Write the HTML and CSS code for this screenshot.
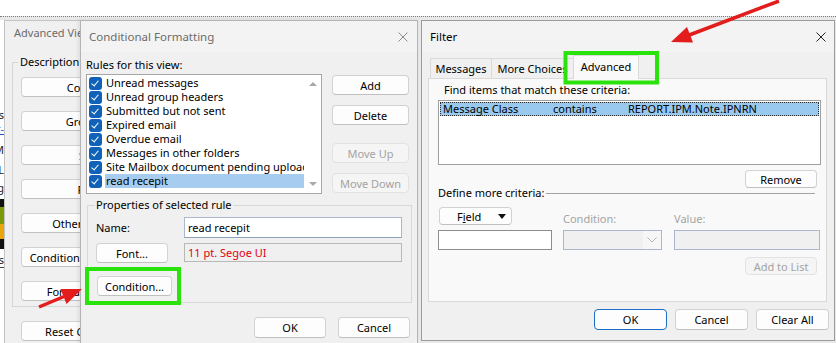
FILE: index.html
```html
<!DOCTYPE html>
<html lang="en">
<head>
  <meta charset="UTF-8" />
  <title>Conditional Formatting and Filter</title>
  <link rel="stylesheet" href="styles.css">
</head>
<body>
  <div class="desk">
    <div class="backdrop"></div>

    <div class="sliver">
      <span class="sl-line">ws</span>
      <span class="sl-line sl-link">r-</span>
      <span class="sl-line sl-m">M</span>
      <span class="sl-line sl-l">L</span>
      <span class="sl-line sl-g">g</span>
      <span class="sl-bar sl-black"></span>
      <span class="sl-bar sl-green"></span>
      <span class="sl-bar sl-orange"></span>
      <span class="sl-bar sl-black2"></span>
      <span class="sl-line sl-s">ts</span>
    </div>

    <section class="win win-back">
      <div class="back-title">Advanced View Settings: Compact</div>
      <fieldset class="back-group">
        <legend>Description</legend>
        <button class="btn back-btn">Columns...</button>
        <button class="btn back-btn">Group By...</button>
        <button class="btn back-btn">Sort...</button>
        <button class="btn back-btn">Filter...</button>
        <button class="btn back-btn">Other Settings...</button>
        <button class="btn back-btn">Conditional Formatting...</button>
        <button class="btn back-btn">Format Columns...</button>
      </fieldset>
      <button class="btn back-btn back-reset">Reset Current View</button>
    </section>

    <section class="win win-cf">
      <header class="win-title inactive">
        <span>Conditional Formatting</span>
        <svg class="close" width="10" height="10" viewBox="0 0 10 10"><path d="M0.5 0.5L9.5 9.5M9.5 0.5L0.5 9.5" /></svg>
      </header>
      <div class="cf-body">
        <div class="cf-label">Rules for this view:</div>
        <div class="cf-rules">
          <div class="rule-list">
            <ul class="rule-items">
              <li><span class="check"></span><span class="rule-name">Unread messages</span></li>
              <li><span class="check"></span><span class="rule-name">Unread group headers</span></li>
              <li><span class="check"></span><span class="rule-name">Submitted but not sent</span></li>
              <li><span class="check"></span><span class="rule-name">Expired email</span></li>
              <li><span class="check"></span><span class="rule-name">Overdue email</span></li>
              <li><span class="check"></span><span class="rule-name">Messages in other folders</span></li>
              <li><span class="check"></span><span class="rule-name">Site Mailbox document pending upload</span></li>
              <li class="selected"><span class="check"></span><span class="rule-name">read recepit</span></li>
            </ul>
            <div class="vscroll">
              <span class="tri tri-up"></span>
              <span class="tri tri-down"></span>
            </div>
          </div>
          <div class="rule-actions">
            <button class="btn act-add">Add</button>
            <button class="btn act-delete">Delete</button>
            <button class="btn act-up" disabled>Move Up</button>
            <button class="btn act-down" disabled>Move Down</button>
          </div>
        </div>

        <fieldset class="props">
          <legend>Properties of selected rule</legend>
          <div class="prop-grid">
            <span class="prop-label">Name:</span>
            <div class="field field-name">read recepit</div>
            <button class="btn btn-font">Font...</button>
            <div class="field field-font">11 pt. Segoe UI</div>
            <button class="btn btn-cond">Condition...</button>
          </div>
        </fieldset>

        <div class="dlg-actions cf-actions">
          <button class="btn">OK</button>
          <button class="btn">Cancel</button>
        </div>
      </div>
    </section>

    <section class="win win-filter">
      <header class="win-title">
        <span>Filter</span>
        <svg class="close dark" width="10" height="10" viewBox="0 0 10 10"><path d="M0.5 0.5L9.5 9.5M9.5 0.5L0.5 9.5" /></svg>
      </header>
      <div class="tabs">
        <span class="tab tab-msg">Messages</span>
        <span class="tab tab-more">More Choices</span>
        <span class="tab tab-adv active">Advanced</span>
      </div>
      <div class="tab-panel">
        <div class="panel-label">Find items that match these criteria:</div>
        <div class="crit-list">
          <div class="crit-row">
            <span>Message Class</span>
            <span>contains</span>
            <span>REPORT.IPM.Note.IPNRN</span>
          </div>
        </div>
        <button class="btn small btn-remove">Remove</button>
        <div class="define">Define more criteria:</div>
        <div class="crit-form">
          <button class="btn small btn-field"><span>F<u>i</u>eld</span><span class="caret"></span></button>
          <span class="muted">Condition:</span>
          <span class="muted">Value:</span>
          <div class="input input-field"></div>
          <div class="input input-off input-combo">
            <span class="chev">
              <svg width="10" height="6" viewBox="0 0 10 6"><path d="M0.5 0.5L5 5L9.5 0.5" /></svg>
            </span>
          </div>
          <div class="input input-off"></div>
        </div>
        <button class="btn small btn-addlist" disabled>Add to List</button>
      </div>
      <div class="dlg-actions filter-actions">
        <button class="btn btn-default">OK</button>
        <button class="btn">Cancel</button>
        <button class="btn">Clear All</button>
      </div>
    </section>

    <svg class="marks" width="836" height="343" viewBox="0 0 836 343">
      <rect class="green" x="87" y="269" width="92" height="34" />
      <rect class="green" x="565.5" y="53" width="91.5" height="29.5" />
      <line class="red" x1="779" y1="1" x2="688" y2="35.5" />
      <polygon class="red-head" points="671,42 693,42.5 687,27" />
      <line class="red" x1="39" y1="307" x2="64" y2="296.5" />
      <polygon class="red-head" points="82,289 66.5,304 60.5,289" />
    </svg>
  </div>
</body>
</html>
```

FILE: styles.css
```css
body {
  margin: 0;
  background: #ffffff;
  font-family: "Noto Sans", "Open Sans", sans-serif;
  font-size: 11px;
  color: #000000;
}
.desk {
  position: relative;
  width: 836px;
  height: 343px;
  overflow: hidden;
}
.backdrop {
  position: absolute;
  left: 0;
  top: 16px;
  width: 836px;
  height: 327px;
  background: #e8e8e8;
  border-top: 1px dotted #7c7c7c;
}

/* bits of the window behind everything, left edge */
.sliver {
  position: absolute;
  left: 0;
  top: 20px;
  width: 4px;
  height: 323px;
  background: #ffffff;
  display: flex;
  flex-direction: column;
  padding-top: 88px;
  box-sizing: border-box;
  overflow: hidden;
}
.sl-line {
  display: flex;
  justify-content: flex-end;
  height: 14px;
  line-height: 14px;
  white-space: nowrap;
  color: #222;
}
.sl-link {
  color: #1a5fd0;
  text-decoration: underline;
}
.sl-m { margin-top: 7px; }
.sl-l { margin-top: 6px; }
.sl-g { margin-top: 4px; }
.sl-bar { display: block; flex: none; }
.sl-black { height: 8px; margin-top: 4px; background: #101010; }
.sl-green { height: 17px; background: #7b9a08; }
.sl-orange { height: 15px; background: #e6a60c; }
.sl-black2 { height: 10px; background: #101010; }
.sl-s { margin-top: 4px; border-bottom: 1px solid #444; }

.win {
  position: absolute;
  box-sizing: border-box;
  background: #f0f0f0;
  border: 1px solid #aaaaaa;
}

/* Advanced View Settings (behind, only its left edge shows) */
.win-back {
  left: 4px;
  top: 20px;
  width: 80px;
  height: 330px;
  overflow: hidden;
  border-color: #c4c4c4;
}
.back-title {
  padding: 5px 0 0 9px;
  line-height: 14px;
  color: #6b6b6b;
  white-space: nowrap;
}
.back-group {
  margin: 15px 0 0 7px;
  padding: 8px 0 5px 8px;
  width: 390px;
  border: 1px solid #d6d6d6;
  display: flex;
  flex-direction: column;
  align-items: flex-start;
  gap: 14px;
}
.back-group legend {
  margin-left: -3px;
  padding: 0 2px;
  line-height: 14px;
}
.back-btn {
  width: 146px;
  flex: none;
}
.back-reset {
  display: block;
  margin: 14px 0 0 16px;
}

/* shared */
.btn {
  box-sizing: border-box;
  height: 20px;
  padding: 0;
  font: inherit;
  color: #000000;
  background: #fdfdfd;
  border: 1px solid #d2d2d2;
  border-bottom-color: #c0c0c0;
  border-radius: 4px;
  white-space: nowrap;
}
.btn:disabled {
  background: #f5f5f5;
  border-color: #e2e2e2;
  color: #a3a3a3;
}
.win-title {
  height: 31px;
  display: flex;
  align-items: center;
  justify-content: space-between;
  padding: 0 8px 0 8px;
  background: #f3f3f3;
  font-size: 11.5px;
}
.win-title.inactive { color: #6b6b6b; }
.close path {
  stroke: #8a8a8a;
  stroke-width: 1;
  fill: none;
}
.close.dark path { stroke: #222; }
fieldset legend { padding: 0; }

/* Conditional Formatting */
.win-cf {
  left: 80px;
  top: 20px;
  width: 338px;
  height: 330px;
  border-color: #b4b4b4;
  box-shadow: -2px 0 4px rgba(0, 0, 0, 0.08);
}
.win-cf .win-title { padding-right: 9px; }
.cf-body {
  padding: 6px 7px 0 5px;
}
.cf-label {
  line-height: 14px;
}
.cf-rules {
  margin-top: 2px;
  display: grid;
  grid-template-columns: 236px 77px;
  column-gap: 10px;
  align-items: start;
}
.rule-list {
  box-sizing: border-box;
  height: 120px;
  display: flex;
  background: #ffffff;
  border: 1px solid #a6a6a6;
}
.rule-items {
  flex: 1;
  min-width: 0;
  margin: 0;
  padding: 1px 0 0 2px;
  list-style: none;
}
.rule-items li {
  height: 14px;
  display: flex;
  align-items: center;
}
.check {
  flex: none;
  position: relative;
  width: 13px;
  height: 13px;
  margin-right: 3px;
  border-radius: 3px;
  background: #0f62b8;
}
.check::after {
  content: "";
  position: absolute;
  left: 4px;
  top: 2px;
  width: 3px;
  height: 6px;
  border-right: 1px solid #ffffff;
  border-bottom: 1px solid #ffffff;
  transform: rotate(40deg);
}
.rule-name {
  flex: 1;
  min-width: 0;
  padding-left: 1px;
  line-height: 14px;
  white-space: nowrap;
  overflow: hidden;
}
.selected .rule-name { background: #a6cdef; }
.vscroll {
  width: 17px;
  display: flex;
  flex-direction: column;
  justify-content: space-between;
  align-items: center;
  padding: 7px 0;
}
.tri {
  width: 0;
  height: 0;
  border-left: 4px solid transparent;
  border-right: 4px solid transparent;
}
.tri-up { border-bottom: 4px solid #a8a8a8; }
.tri-down { border-top: 4px solid #a8a8a8; }
.rule-actions {
  display: flex;
  flex-direction: column;
}
.rule-actions .btn { width: 77px; }
.act-add { margin-top: 1px; }
.act-delete { margin-top: 10px; }
.act-up { margin-top: 18px; }
.act-down { margin-top: 10px; }

.props {
  box-sizing: border-box;
  width: 325px;
  margin: 4px 0 0 1px;
  padding: 5px 9px 6px 8px;
  border: 1px solid #d8d8d8;
}
.props legend {
  margin-left: -1px;
  padding: 0 1px;
  line-height: 14px;
}
.prop-grid {
  display: grid;
  grid-template-columns: 88px 1fr;
  row-gap: 5px;
  align-items: start;
}
.prop-label { line-height: 21px; }
.field {
  box-sizing: border-box;
  padding-left: 3px;
  white-space: nowrap;
}
.field-name {
  height: 21px;
  line-height: 19px;
  background: #ffffff;
  border: 1px solid #a9b8cd;
  border-bottom-color: #8fa2bd;
}
.field-font {
  height: 19px;
  line-height: 17px;
  border: 1px solid #b8b8b8;
  color: #e4000f;
}
.btn-font { width: 72px; }
.btn-cond {
  width: 75px;
  margin: 8px 0 0 1px;
}
.dlg-actions {
  display: flex;
  justify-content: flex-end;
}
.dlg-actions .btn { height: 21px; }
.cf-actions {
  margin-top: 14px;
  gap: 12px;
}
.cf-actions .btn { width: 72px; }

/* Filter */
.win-filter {
  left: 421px;
  top: 20px;
  width: 414px;
  height: 321px;
  border-color: #9c9c9c;
}
.tabs {
  display: flex;
  align-items: flex-end;
  height: 25px;
  margin: 1px 0 0 8px;
}
.tab {
  box-sizing: border-box;
  height: 20px;
  line-height: 19px;
  text-align: center;
  background: #f0f0f0;
  border: 1px solid #dadada;
  border-bottom: none;
  white-space: nowrap;
  overflow: hidden;
}
.tab + .tab { margin-left: -1px; }
.tab-msg { width: 62px; }
.tab-more { width: 83px; }
.tab-adv { width: 66px; }
.tab.active {
  position: relative;
  z-index: 1;
  height: 24px;
  line-height: 21px;
  margin-bottom: -1px;
  background: #f9f9f9;
}
.tab-panel {
  box-sizing: border-box;
  width: 399px;
  height: 224px;
  margin-left: 6px;
  padding: 4px 0 0 9px;
  background: #f9f9f9;
  border: 1px solid #dadada;
  display: flex;
  flex-direction: column;
}
.panel-label {
  padding-left: 6px;
  line-height: 14px;
}
.crit-list {
  box-sizing: border-box;
  width: 383px;
  height: 65px;
  margin-top: 3px;
  padding: 1px;
  background: #ffffff;
  border: 1px solid #9f9f9f;
}
.crit-row {
  box-sizing: border-box;
  height: 14px;
  padding-left: 2px;
  line-height: 12px;
  display: grid;
  grid-template-columns: 110px 75px auto;
  background: #99c9ef;
  border: 1px dotted #2a2a2a;
  white-space: nowrap;
}
.btn.small { height: 18px; }
.btn-remove {
  align-self: flex-end;
  width: 72px;
  margin: 5px 9px 0 0;
}
.define {
  display: flex;
  align-items: center;
  margin-top: -2px;
  padding-right: 11px;
  line-height: 14px;
}
.define::after {
  content: "";
  flex: 1;
  height: 1px;
  margin-left: 2px;
  background: #a3a3a3;
}
.crit-form {
  margin-top: 7px;
  display: grid;
  grid-template-columns: 125px 111px 146px;
  grid-template-rows: 19px 20px;
  row-gap: 4px;
}
.btn-field {
  align-self: start;
  width: 73px;
  height: 17px;
  margin-left: 1px;
  display: flex;
  align-items: center;
  justify-content: space-between;
  padding: 0 5px 0 17px;
}
.btn-field u { text-decoration-thickness: 1px; }
.caret {
  width: 0;
  height: 0;
  border-left: 4.5px solid transparent;
  border-right: 4.5px solid transparent;
  border-top: 5px solid #111;
}
.muted {
  align-self: end;
  line-height: 14px;
  color: #a3a3a3;
}
.input {
  box-sizing: border-box;
  height: 20px;
  background: #ffffff;
  border: 1px solid #8c8c8c;
}
.input-field { width: 114px; }
.input-off {
  background: #f0f0f0;
  border: 1px solid #a9b8cc;
}
.input-combo {
  width: 99px;
  display: flex;
  justify-content: flex-end;
}
.chev {
  width: 18px;
  display: flex;
  align-items: center;
  justify-content: center;
  background: #f6f6f6;
}
.chev path {
  fill: none;
  stroke: #b4b4b4;
  stroke-width: 1;
}
.btn-addlist {
  align-self: flex-end;
  width: 72px;
  height: 19px;
  margin: 7px 9px 0 0;
}
.filter-actions {
  margin-top: 7px;
  gap: 8px;
  padding-right: 5px;
}
.filter-actions .btn { width: 73px; }
.btn-default {
  border-color: #1a6fc4;
}

/* annotations drawn over the screenshot */
.marks {
  position: absolute;
  left: 0;
  top: 0;
  pointer-events: none;
}
.green {
  fill: none;
  stroke: #2ae20c;
  stroke-width: 4;
}
.red {
  stroke: #e31c1c;
  stroke-width: 3.5;
}
.red-head { fill: #e31c1c; }
```
